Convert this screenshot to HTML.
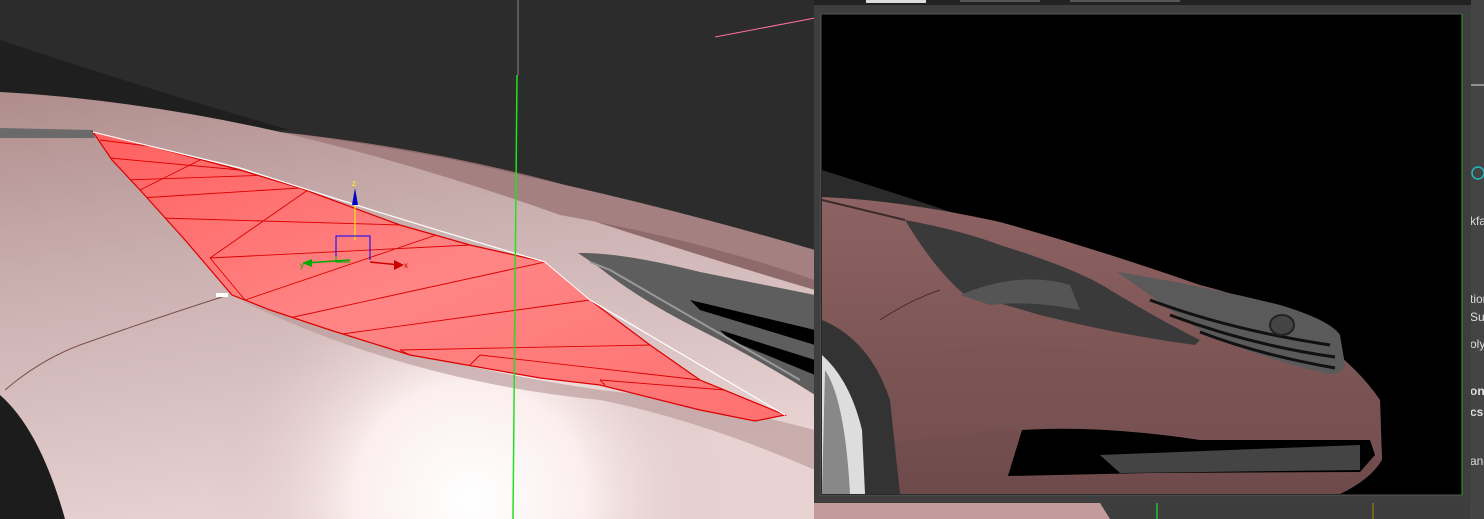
<!DOCTYPE html>
<html><head><meta charset="utf-8"><style>
html,body{margin:0;padding:0;width:1484px;height:519px;overflow:hidden;background:#2b2b2b}
svg{display:block}
.ui{font-family:"Liberation Sans",sans-serif;font-size:12px;fill:#ddd}
</style></head><body>
<svg width="1484" height="519" viewBox="0 0 1484 519" xmlns="http://www.w3.org/2000/svg">
<defs>
<linearGradient id="body" x1="0" y1="0" x2="0.3" y2="1">
<stop offset="0" stop-color="#b08c8c"/><stop offset="0.4" stop-color="#c9aeae"/><stop offset="1" stop-color="#e8d2d2"/>
</linearGradient>
<radialGradient id="hl" cx="470" cy="500" r="260" gradientUnits="userSpaceOnUse">
<stop offset="0" stop-color="#ffffff"/><stop offset="0.45" stop-color="#fbeeee"/><stop offset="1" stop-color="#d8bebe" stop-opacity="0"/>
</radialGradient>
<linearGradient id="red" x1="0" y1="0" x2="1" y2="1">
<stop offset="0" stop-color="#ff6060"/><stop offset="0.5" stop-color="#ff8585"/><stop offset="1" stop-color="#ff7070"/>
</linearGradient>
<linearGradient id="pb" x1="0" y1="0" x2="0" y2="1">
<stop offset="0" stop-color="#8e6262"/><stop offset="1" stop-color="#6e4a4a"/>
</linearGradient>
<clipPath id="leaf"><path d="M93 132 L150 146 L240 170 L300 188 L400 225 L470 245 L545 262 L590 300 L650 345 L700 380 L785 415 L755 421 L700 410 L600 385 L540 378 L410 355 L330 330 L270 310 L232 295 L185 240 L140 190 L112 160Z"/></clipPath>
</defs>
<rect x="0" y="0" width="820" height="519" fill="#2c2c2c"/>
<path d="M0 40 Q150 90 290 130 L0 130Z" fill="#1f1f1f"/>
<path d="M0 92 Q120 98 280 132 Q450 150 600 195 Q720 225 815 250 L815 300 L0 300Z" fill="#8f6a6a"/>
<path d="M0 92 Q140 100 280 132 Q420 160 560 210 Q680 250 815 290 L815 519 L0 519Z" fill="url(#body)"/>
<path d="M280 132 Q420 150 520 175 Q660 205 815 250 L815 280 Q700 240 560 215 Q420 165 280 132Z" fill="#a58080"/>
<rect x="0" y="0" width="820" height="519" fill="url(#hl)"/>
<path d="M0 128 L93 130 L95 138 L0 138Z" fill="#6a6a6a"/>
<path d="M230 295 Q400 380 600 400 Q700 420 815 470 L815 430 Q700 400 600 390 Q400 360 240 300Z" fill="#b59494" opacity="0.6"/>
<path d="M578 253 Q620 252 700 272 L815 295 L815 395 Q760 360 700 330 Q640 300 600 268Z" fill="#5e5e5e"/>
<path d="M690 300 L815 330 L815 345 L700 310Z" fill="#000"/>
<path d="M720 330 L815 360 L815 375 L730 340Z" fill="#000"/>
<path d="M590 262 L610 270 L800 380" stroke="#999" stroke-width="2" fill="none"/>
<path d="M93 132 L150 146 L240 170 L300 188 L400 225 L470 245 L545 262 L590 300 L650 345 L700 380 L785 415 L755 421 L700 410 L600 385 L540 378 L410 355 L330 330 L270 310 L232 295 L185 240 L140 190 L112 160Z" fill="url(#red)" stroke="#d00" stroke-width="1.2"/>
<g stroke="#d00" stroke-width="0.9" fill="none" clip-path="url(#leaf)">
<path d="M100 140 L180 150 M110 158 L240 170 M125 180 L270 175 M140 198 L300 188 M160 218 L400 225"/>
<path d="M210 258 L315 185 M210 258 L470 245 M245 300 L510 210 M280 320 L545 262 M335 335 L590 300 M400 350 L650 345 M480 355 L700 380 M600 380 L725 390"/>
<path d="M160 218 L230 295 M210 258 L245 300 M270 310 L280 320 M400 350 L410 355 M480 355 L470 365 M600 380 L605 385"/>
<path d="M140 190 L240 140"/>
</g>
<path d="M93 132 L240 168 Q400 220 545 262 L590 300 L785 415" stroke="#fff" stroke-width="1.2" fill="none"/>
<path d="M225 296 Q150 320 80 345 Q40 360 5 390" stroke="#7a5050" stroke-width="1" fill="none"/>
<rect x="216" y="293" width="12" height="4" fill="#fff"/>
<path d="M0 395 Q40 430 65 519 L0 519Z" fill="#1c1c1c"/>
<line x1="355" y1="205" x2="355" y2="240" stroke="#ff0" stroke-width="1"/>
<path d="M352 205 L355 188 L358 205Z" fill="#00c"/>
<text x="352" y="186" font-size="8" fill="#ff0" font-family="Liberation Sans">z</text>
<path d="M336 256 L336 236 L370 236 L370 260" stroke="#00f" fill="none"/>
<path d="M336 256 L336 262 L350 262" stroke="#0a0" fill="none"/>
<path d="M350 260 L305 263" stroke="#0a0" stroke-width="1.5"/>
<path d="M302 263 L312 259 L312 267Z" fill="#0a0"/>
<path d="M370 262 L400 265" stroke="#c00" stroke-width="1.5"/>
<path d="M404 265 L394 260 L394 270Z" fill="#c00"/>
<text x="404" y="268" font-size="8" fill="#c00" font-family="Liberation Sans">x</text>
<text x="300" y="268" font-size="8" fill="#0a0" font-family="Liberation Sans">y</text>
<line x1="518" y1="0" x2="518" y2="75" stroke="#888" stroke-width="1"/>
<line x1="517" y1="75" x2="513" y2="519" stroke="#22e022" stroke-width="1.5"/>
<line x1="715" y1="37" x2="815" y2="18" stroke="#ff6fa0" stroke-width="1"/>
<rect x="814" y="503" width="670" height="16" fill="#3d3d3d"/>
<path d="M814 503 L1100 503 L1110 519 L814 519Z" fill="#c39b9b"/>
<line x1="1157" y1="503" x2="1157" y2="519" stroke="#2f2" />
<line x1="1373" y1="503" x2="1373" y2="519" stroke="#a80" />
<rect x="1470" y="0" width="14" height="519" fill="#444"/>
<line x1="1471" y1="85" x2="1484" y2="85" stroke="#ddd"/>
<text class="ui" x="1470" y="225">kfa</text>
<text class="ui" x="1470" y="303">tior</text>
<text class="ui" x="1470" y="321">Sub</text>
<text class="ui" x="1470" y="348">olyg</text>
<text class="ui" x="1470" y="395" font-weight="bold">on</text>
<text class="ui" x="1470" y="416" font-weight="bold">cs</text>
<text class="ui" x="1470" y="465">ang</text>
<circle cx="1478" cy="173" r="6" stroke="#2bb" stroke-width="1.5" fill="none"/>
<rect x="814" y="0" width="657" height="503" fill="#3e3e3e"/>
<rect x="814" y="0" width="657" height="5" fill="#222"/>
<rect x="866" y="0" width="60" height="3" fill="#ddd"/>
<rect x="960" y="0" width="80" height="2" fill="#555"/>
<rect x="1070" y="0" width="110" height="2" fill="#555"/>
<rect x="821" y="14" width="641" height="481" fill="#000" stroke="#555" stroke-width="1"/>
<line x1="1462" y1="14" x2="1462" y2="495" stroke="#2a2"/>
<clipPath id="pc"><rect x="822" y="15" width="640" height="480"/></clipPath>
<g clip-path="url(#pc)">
<path d="M822 170 L900 195 L960 215 L822 215Z" fill="#2a2a2a"/>
<path d="M822 197 Q900 200 1000 222 Q1100 250 1200 285 Q1280 305 1320 340 Q1360 370 1380 400 L1382 460 Q1370 480 1340 494 L822 494Z" fill="url(#pb)"/>
<path d="M822 380 L900 360 Q1000 330 1140 360 L1240 360 Q1320 370 1380 400 L1382 460 L1200 440 L1000 430 L822 450Z" fill="#7a5454" opacity="0.5"/>
<path d="M905 220 Q960 230 1000 245 Q1080 270 1110 290 Q1160 320 1200 340 L1195 345 Q1120 335 1040 315 Q990 300 965 295 Q935 270 905 220Z" fill="#3a3a3a"/>
<path d="M960 295 Q1020 270 1070 285 L1080 310 Q1030 300 990 305Z" fill="#555"/>
<path d="M1117 272 Q1200 285 1280 305 Q1330 320 1340 335 L1345 365 Q1340 378 1320 372 Q1250 355 1200 330 Q1170 310 1150 295Z" fill="#5a5a5a"/>
<g stroke="#111" stroke-width="3" fill="none">
<path d="M1150 300 Q1230 330 1330 345"/><path d="M1170 315 Q1250 345 1335 357"/><path d="M1200 332 Q1260 355 1335 368"/>
</g>
<ellipse cx="1282" cy="325" rx="12" ry="10" fill="#444" stroke="#222" stroke-width="2"/>
<path d="M1022 430 Q1100 425 1200 440 L1370 440 L1375 455 L1360 472 L1150 473 L1008 476Z" fill="#000"/>
<path d="M1100 455 L1360 445 L1360 470 L1120 473Z" fill="#444"/>
<path d="M822 320 Q870 340 890 400 L900 494 L822 494Z" fill="#333"/>
<path d="M822 355 Q850 380 862 430 L865 494 L822 494Z" fill="#ddd"/>
<path d="M825 370 Q845 400 850 494 L822 494Z" fill="#888"/>
<path d="M822 200 L905 220" stroke="#3a2a2a" stroke-width="2"/>
<path d="M880 320 Q910 300 940 290" stroke="#4a3030" fill="none"/>
</g>
</svg>
</body></html>
